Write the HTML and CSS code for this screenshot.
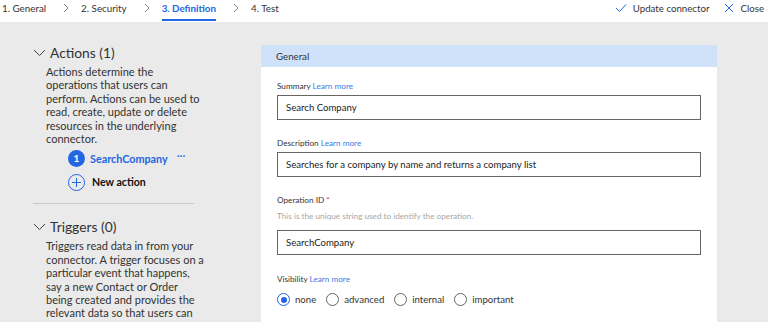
FILE: index.html
```html
<!DOCTYPE html>
<html>
<head>
<meta charset="utf-8">
<link rel="stylesheet" href="styles.css">
</head>
<body>
<header class="topbar">
  <nav class="steps">
    <span class="step">1. General</span>
    <svg class="sep" width="8" height="10" viewBox="0 0 8 10"><polyline points="2,1 6,5 2,9" fill="none" stroke="#888" stroke-width="1"/></svg>
    <span class="step">2. Security</span>
    <svg class="sep" width="8" height="10" viewBox="0 0 8 10"><polyline points="2,1 6,5 2,9" fill="none" stroke="#888" stroke-width="1"/></svg>
    <span class="step active">3. Definition</span>
    <svg class="sep" width="8" height="10" viewBox="0 0 8 10"><polyline points="2,1 6,5 2,9" fill="none" stroke="#888" stroke-width="1"/></svg>
    <span class="step">4. Test</span>
  </nav>
  <div class="actions">
    <span class="cmd"><svg width="12" height="10" viewBox="0 0 12 10"><polyline points="1,5 4.5,8.5 11,1.5" fill="none" stroke="#2266e3" stroke-width="1"/></svg>Update connector</span>
    <span class="cmd"><svg width="10" height="10" viewBox="0 0 10 10"><path d="M1 1 L9 9 M9 1 L1 9" stroke="#2266e3" stroke-width="1" fill="none"/></svg>Close</span>
  </div>
</header>
<main class="main">
  <aside class="sidebar">
    <section class="group">
      <h2 class="group-title"><svg class="chev" width="13" height="8" viewBox="0 0 13 8"><polyline points="1,1 6.5,6.5 12,1" fill="none" stroke="#444" stroke-width="1"/></svg>Actions (1)</h2>
      <p class="group-desc">Actions determine the<br>operations that users can<br>perform. Actions can be used to<br>read, create, update or delete<br>resources in the underlying<br>connector.</p>
      <div class="item">
        <span class="num">1</span><span class="item-name">SearchCompany</span><span class="more">···</span>
      </div>
      <div class="item">
        <svg class="plus" width="17" height="17" viewBox="0 0 17 17"><circle cx="8.5" cy="8.5" r="8" fill="none" stroke="#2266e3" stroke-width="1"/><path d="M8.5 4 V13 M4 8.5 H13" stroke="#2266e3" stroke-width="1"/></svg><span class="new-action">New action</span>
      </div>
    </section>
    <hr class="divider">
    <section class="group">
      <h2 class="group-title"><svg class="chev" width="13" height="8" viewBox="0 0 13 8"><polyline points="1,1 6.5,6.5 12,1" fill="none" stroke="#444" stroke-width="1"/></svg>Triggers (0)</h2>
      <p class="group-desc">Triggers read data in from your<br>connector. A trigger focuses on a<br>particular event that happens,<br>say a new Contact or Order<br>being created and provides the<br>relevant data so that users can</p>
    </section>
  </aside>
  <section class="panel">
    <div class="panel-head">General</div>
    <div class="panel-body">
      <div class="field">
        <div class="label">Summary <a class="link">Learn more</a></div>
        <div class="input">Search Company</div>
      </div>
      <div class="field">
        <div class="label">Description <a class="link">Learn more</a></div>
        <div class="input">Searches for a company by name and returns a company list</div>
      </div>
      <div class="field">
        <div class="label">Operation ID <span class="req">*</span></div>
        <div class="help">This is the unique string used to identify the operation.</div>
        <div class="input">SearchCompany</div>
      </div>
      <div class="field">
        <div class="label">Visibility <a class="link">Learn more</a></div>
        <div class="radios">
          <span class="radio checked"><span class="dot"></span>none</span>
          <span class="radio"><span class="dot"></span>advanced</span>
          <span class="radio"><span class="dot"></span>internal</span>
          <span class="radio"><span class="dot"></span>important</span>
        </div>
      </div>
    </div>
  </section>
</main>
</body>
</html>
```
FILE: styles.css
```css
* { box-sizing: border-box; }
html, body { margin: 0; padding: 0; }
body {
  width: 768px;
  height: 322px;
  overflow: hidden;
  font-family: Lato, "Open Sans", sans-serif;
  color: #333;
  background: #eaeaea;
}
.topbar {
  height: 22px;
  background: #fff;
  display: flex;
  justify-content: space-between;
  align-items: flex-start;
}
.steps {
  display: flex;
  align-items: flex-start;
  padding-left: 2px;
}
.step {
  font-size: 9.8px;
  line-height: 16px;
  color: #333;
  height: 21px;
  border-bottom: 2px solid transparent;
}
.step.active {
  color: #2266e3;
  font-weight: 700;
  border-bottom: 2px solid #2266e3;
}
.sep { margin: 3px 11px 0 16px; }
.actions { display: flex; padding-right: 4px; }
.cmd {
  font-size: 9.7px;
  line-height: 16px;
  color: #333;
  display: flex;
  align-items: center;
  margin-left: 15px;
}
.cmd svg { margin-right: 6px; }

.main {
  display: flex;
  align-items: flex-start;
  height: 300px;
  overflow: hidden;
}
.sidebar {
  width: 261px;
  padding: 21px 67px 0 33px;
}
.group-title {
  margin: 0;
  font-size: 13.8px;
  font-weight: 400;
  color: #333;
  line-height: 20px;
  display: flex;
  align-items: center;
}
.chev { margin-right: 4px; }
.group-desc {
  margin: 2px 0 0 13px;
  font-size: 11px;
  line-height: 13.4px;
  color: #333;
  white-space: nowrap;
}
.item {
  display: flex;
  align-items: center;
  margin-left: 35px;
  height: 24px;
}
.item:first-of-type { margin-top: 1px; }
.num {
  width: 17px;
  height: 17px;
  border-radius: 50%;
  background: #2266e3;
  color: #fff;
  font-size: 10px;
  font-weight: 700;
  display: flex;
  align-items: center;
  justify-content: center;
  margin-right: 5px;
}
.item-name {
  color: #2266e3;
  font-weight: 700;
  font-size: 10.8px;
}
.more { color: #2266e3; margin-left: 9px; font-size: 11px; position: relative; top: -3px; }
.plus { margin-right: 7px; }
.new-action { font-weight: 700; font-size: 10.6px; color: #111; }
.divider {
  border: 0;
  border-top: 1px solid #c8c8c8;
  margin: 9px 0 13px 0;
}

.panel {
  margin-top: 23px;
  width: 456px;
  background: #fff;
  height: 277px;
}
.panel-head {
  height: 22px;
  background: #d0e1fa;
  font-size: 9.7px;
  line-height: 22px;
  padding-left: 15px;
  color: #333;
}
.panel-body { padding: 13px 16px 0 16px; }
.field { margin-bottom: 17px; }
.label {
  font-size: 8.2px;
  line-height: 12px;
  color: #333;
  margin-bottom: 3px;
}
.link { color: #3b7be6; }
.req { color: #d13438; }
.help {
  font-size: 8.2px;
  line-height: 12px;
  color: #a6a6a6;
  margin: 4px 0 8px;
}
.input {
  height: 25px;
  border: 1px solid #666;
  font-size: 9.6px;
  line-height: 23px;
  padding-left: 8px;
  color: #222;
}
.field:nth-child(3) { margin-bottom: 18px; }
.radios {
  display: flex;
  align-items: center;
  margin-top: 8px;
}
.radio {
  display: flex;
  align-items: center;
  font-size: 9.6px;
  color: #333;
  margin-right: 10px;
}
.dot {
  width: 13px;
  height: 13px;
  border: 1px solid #666;
  border-radius: 50%;
  margin-right: 5px;
  position: relative;
}
.radio.checked .dot { border-color: #2266e3; }
.radio.checked .dot::after {
  content: "";
  position: absolute;
  left: 2.5px;
  top: 2.5px;
  width: 6px;
  height: 6px;
  border-radius: 50%;
  background: #2266e3;
}
```
